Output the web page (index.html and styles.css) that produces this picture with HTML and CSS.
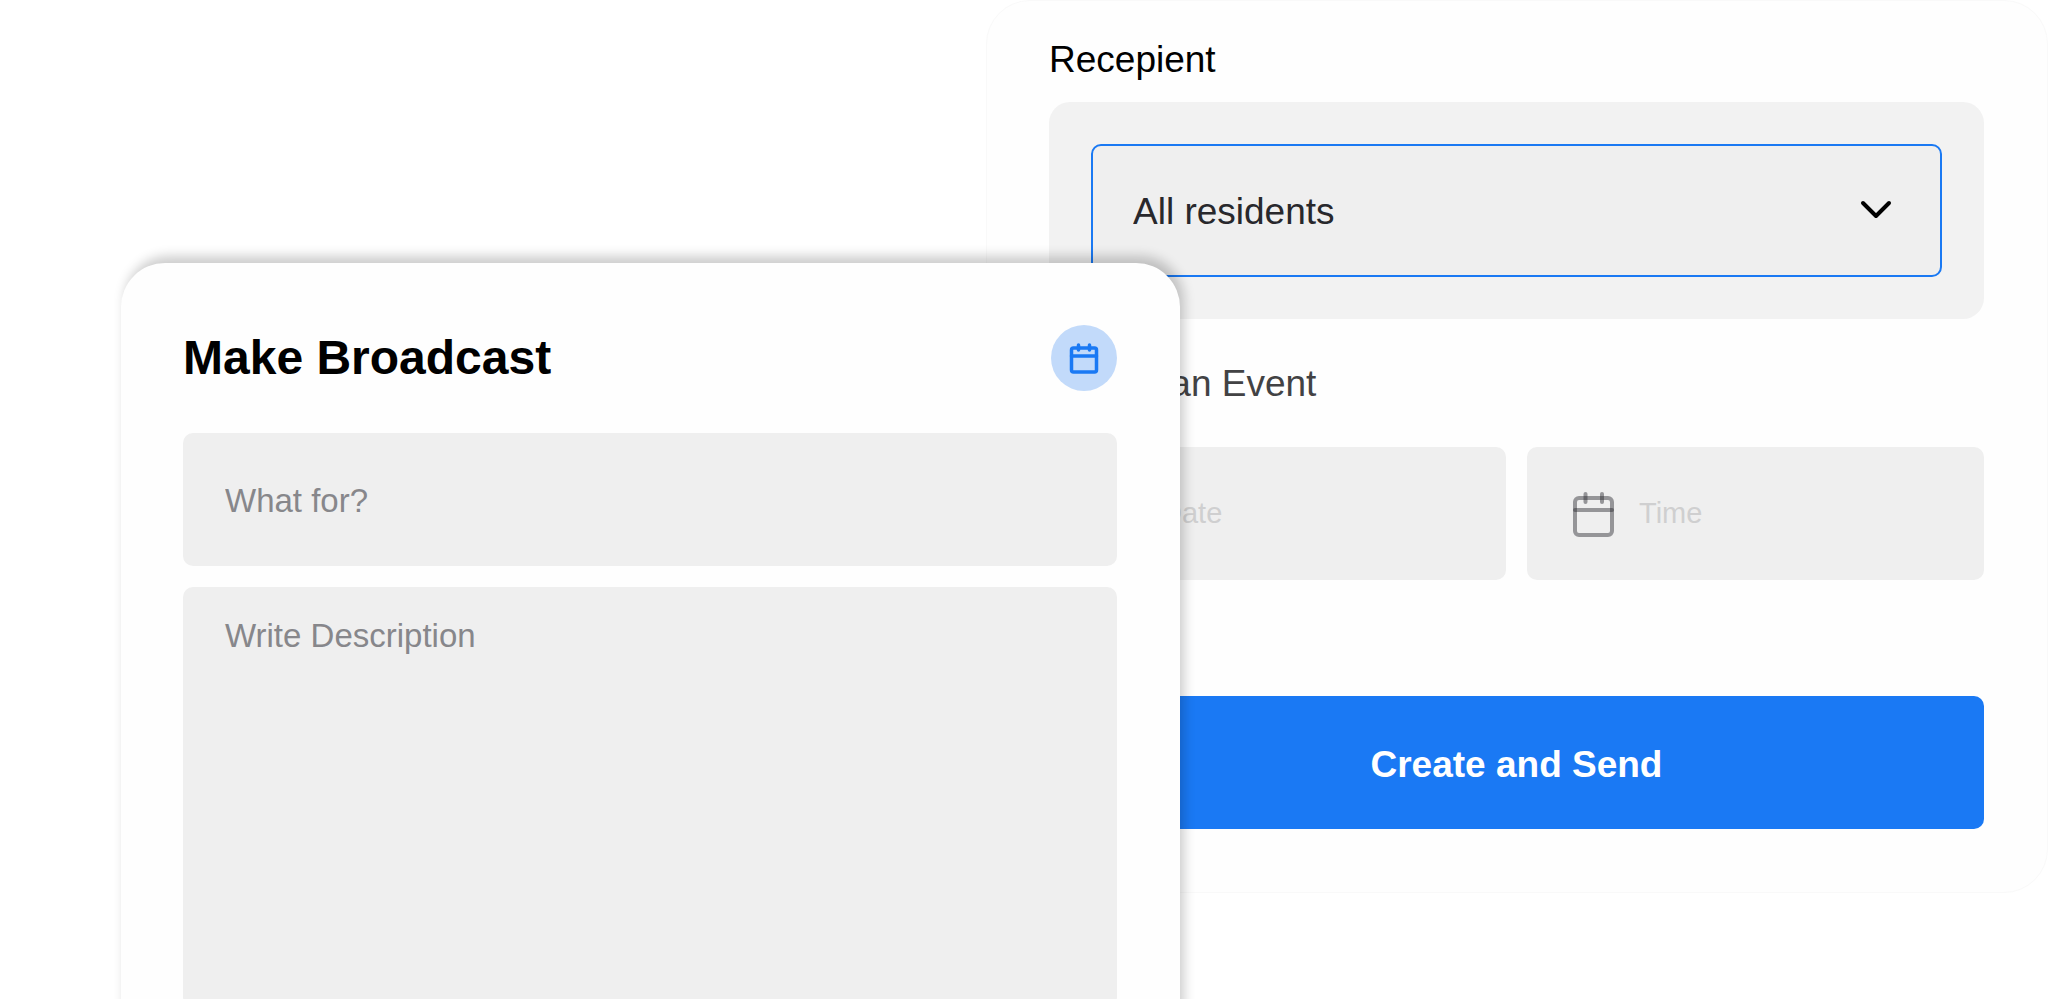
FILE: index.html
```html
<!DOCTYPE html>
<html lang="en">
<head>
    <meta charset="UTF-8">
    <meta name="viewport" content="width=device-width, initial-scale=1.0">
    <title>Make Broadcast</title>
    <link rel="stylesheet" href="styles.css">
</head>
<body>
    <main class="scene">
        <form class="card event-card">
            <label class="section-label" for="recipient">Recepient</label>
            <div class="select-panel">
                <div class="select-wrap">
                    <select class="field select" id="recipient">
                        <option>All residents</option>
                        <option>Owners</option>
                        <option>Tenants</option>
                    </select>
                    <svg class="chevron" viewBox="0 0 34 24" fill="none" stroke="currentColor" stroke-width="4" stroke-linecap="round" stroke-linejoin="round" aria-hidden="true">
                        <path d="M4 5l13 13 13-13"/>
                    </svg>
                </div>
            </div>

            <h2 class="section-title">Create an Event</h2>
            <div class="date-row">
                <label class="field icon-field">
                    <svg class="field-icon" viewBox="0 0 48 48" fill="none" aria-hidden="true">
                        <rect x="6" y="8" width="37" height="37" rx="4"/>
                        <path d="M6 20h37"/>
                        <path d="M16.500 4v8"/>
                        <path d="M33 4v8"/>
                    </svg>
                    <input type="text" placeholder="Date" aria-label="Date">
                </label>
                <label class="field icon-field">
                    <svg class="field-icon" viewBox="0 0 48 48" fill="none" aria-hidden="true">
                        <rect x="6" y="8" width="37" height="37" rx="4"/>
                        <path d="M6 20h37"/>
                        <path d="M16.500 4v8"/>
                        <path d="M33 4v8"/>
                    </svg>
                    <input type="text" placeholder="Time" aria-label="Time">
                </label>
            </div>

            <button class="send-button" type="button">Create and Send</button>
        </form>

        <form class="card broadcast-card">
            <header class="card-header">
                <h1>Make Broadcast</h1>
                <button class="round-button" type="button" aria-label="Pick a date">
                    <svg viewBox="0 0 32 34" fill="none" stroke="currentColor" stroke-width="3.500" stroke-linecap="round" stroke-linejoin="round" aria-hidden="true">
                        <rect x="3.500" y="7" width="25" height="24" rx="2"/>
                        <path d="M3.500 15h25M10.500 4v5M21.500 4v5"/>
                    </svg>
                </button>
            </header>
            <input class="field text-field" type="text" placeholder="What for?" aria-label="What for?">
            <textarea class="field text-area" placeholder="Write Description" aria-label="Write Description"></textarea>
        </form>
    </main>
</body>
</html>
```

FILE: styles.css
```css
* {
    margin: 0;
    padding: 0;
    box-sizing: border-box;
}

body {
    font-family: "Liberation Sans", Arial, Helvetica, sans-serif;
    background: #fff;
    height: 100vh;
    overflow: hidden;
}

input,
select,
textarea,
button {
    font: inherit;
    border: none;
    outline: none;
}

/* The third column is where the two cards overlap */
.scene {
    display: grid;
    grid-template-columns: 121fr 865fr 194fr 868fr;
    align-items: start;
}

.card {
    display: flex;
    flex-direction: column;
    grid-row: 1;
    background: #fefefe;
    border-radius: 44px;
}

.field {
    width: 100%;
    height: 133px;
    background: #efefef;
    border-radius: 10px;
}

/* Event card */
.event-card {
    grid-column: 3 / 5;
    padding: 38px 63px 63px 62px;
    border: 1px solid #f9f9f9;
}

.section-label {
    font-size: 37px;
    line-height: 42px;
    color: #000;
    margin-bottom: 21px;
}

.select-panel {
    padding: 42px;
    background: #f2f2f2;
    border-radius: 21px;
    margin-bottom: 44px;
}

.select-wrap {
    position: relative;
}

.select {
    display: block;
    appearance: none;
    padding: 2px 40px 0;
    border: 2px solid #1a79f3;
    font-size: 37px;
    color: #28282c;
}

.chevron {
    position: absolute;
    right: 49px;
    top: 54px;
    width: 34px;
    height: 24px;
    color: #000;
    pointer-events: none;
}

.section-title {
    font-size: 37px;
    line-height: 42px;
    font-weight: normal;
    color: #424244;
    margin-bottom: 42px;
}

.date-row {
    display: grid;
    grid-template-columns: repeat(2, minmax(0, 1fr));
    gap: 21px;
    margin-bottom: 116px;
}

.icon-field {
    display: flex;
    align-items: center;
    gap: 22px;
    padding: 0 42px;
}

.icon-field input {
    flex: 1;
    min-width: 0;
    background: transparent;
    font-size: 29px;
    color: #28282c;
}

.icon-field input::placeholder {
    color: #cfcfd0;
}

.field-icon {
    flex: none;
    width: 48px;
    height: 48px;
}

/* Translucent strokes, so the crossings come out darker */
.field-icon rect,
.field-icon path {
    stroke: rgba(40, 40, 46, 0.45);
    stroke-width: 4px;
}

.field-icon path {
    stroke-linecap: round;
}

.send-button {
    height: 133px;
    padding-top: 4px;
    background: #1a79f4;
    border-radius: 10px;
    color: #fff;
    font-size: 37px;
    font-weight: bold;
    cursor: pointer;
}

/* Broadcast card */
.broadcast-card {
    grid-column: 2 / 4;
    z-index: 1;
    margin-top: 263px;
    padding: 62px 63px 62px 62px;
    gap: 21px;
    box-shadow: 4px -7px 12px rgba(0, 0, 0, 0.2);
}

.card-header {
    display: flex;
    align-items: center;
    justify-content: space-between;
    margin-bottom: 21px;
}

.card-header h1 {
    font-size: 48px;
    line-height: 66px;
    color: #000;
}

.round-button {
    display: flex;
    align-items: center;
    justify-content: center;
    width: 66px;
    height: 66px;
    border-radius: 50%;
    background: #c2dafa;
    color: #1a79f4;
    cursor: pointer;
}

.round-button svg {
    width: 32px;
    height: 34px;
}

.text-field,
.text-area {
    padding: 2px 42px 0;
    font-size: 33px;
    color: #28282c;
}

.text-area {
    height: 420px;
    padding-top: 28px;
    line-height: 42px;
    resize: none;
}

.text-field::placeholder,
.text-area::placeholder {
    color: #87878b;
}
```
